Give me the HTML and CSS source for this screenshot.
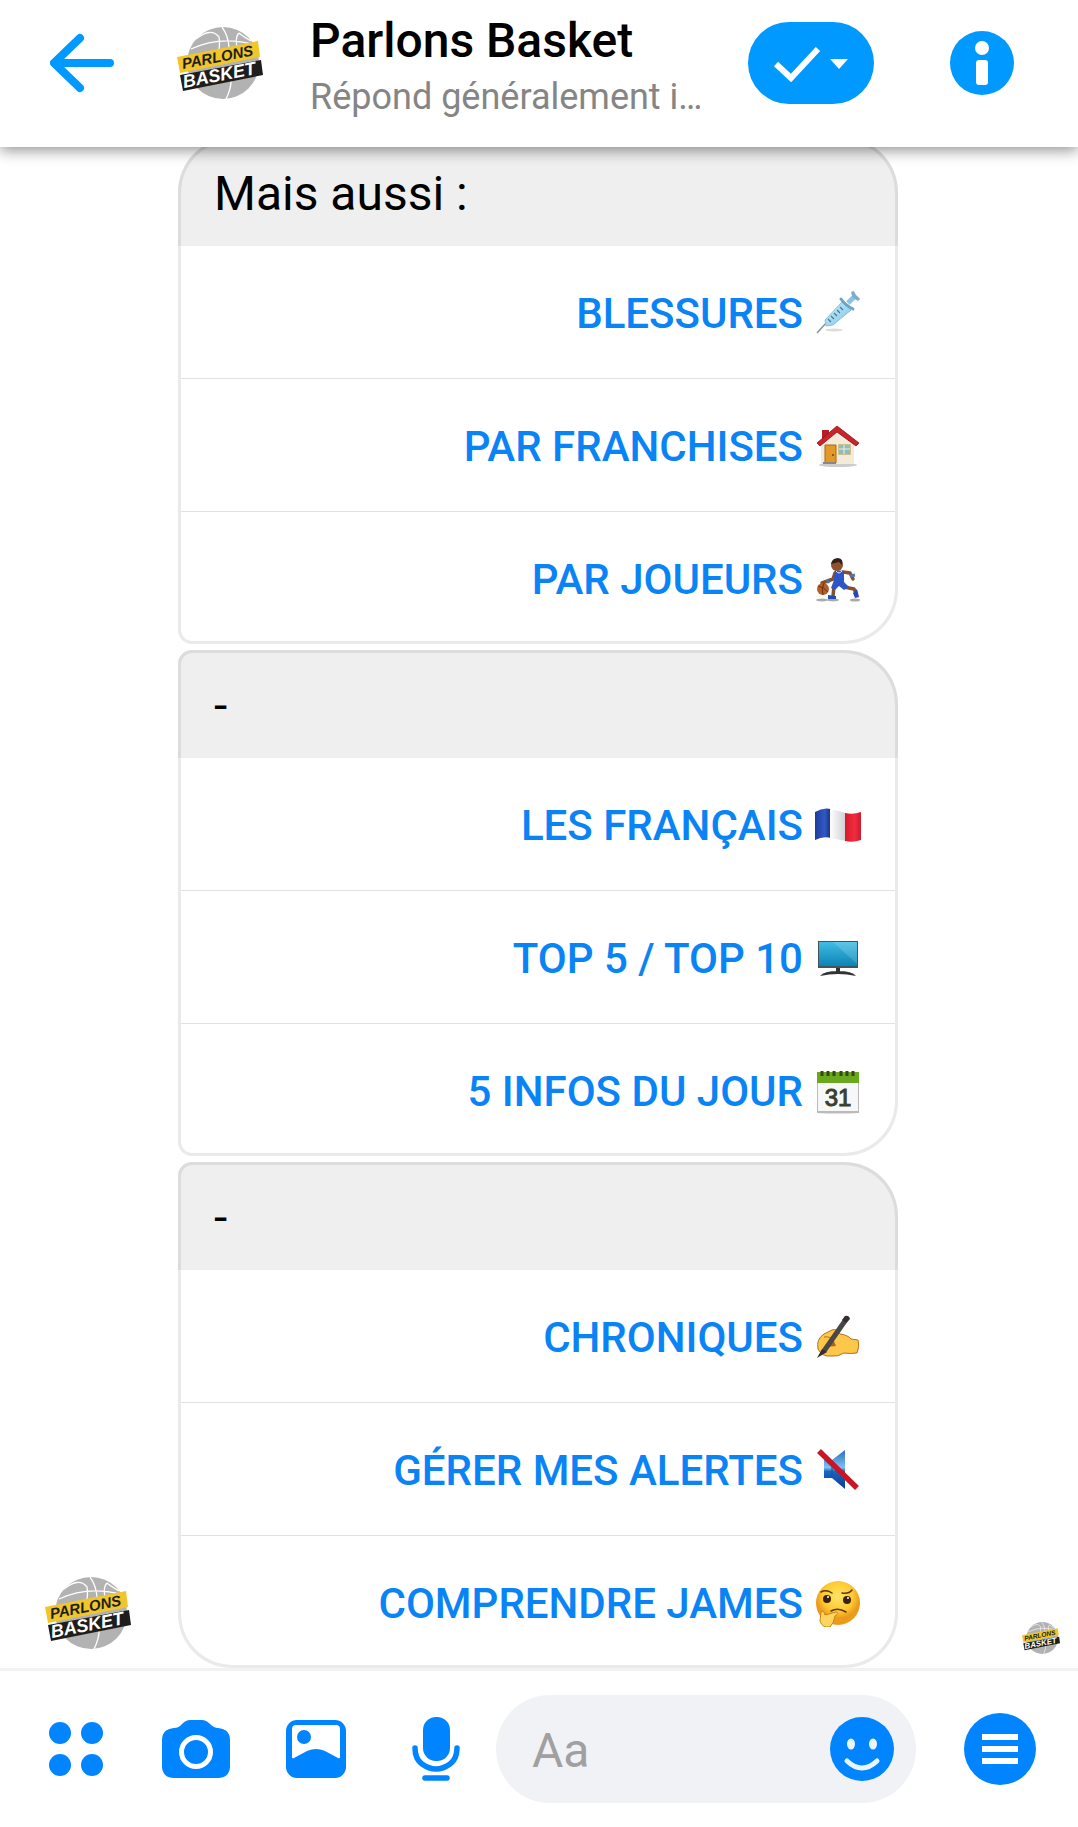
FILE: index.html
```html
<!DOCTYPE html>
<html lang="fr">
<head>
<meta charset="utf-8">
<meta name="viewport" content="width=device-width, initial-scale=1">
<title>Parlons Basket</title>
<link rel="stylesheet" href="styles.css">
</head>
<body>
<svg class="defs" aria-hidden="true">
  <defs>
    <symbol id="logo" viewBox="0 0 86 72">
      <circle cx="46" cy="36" r="36" fill="#b2b2b2"/>
      <g fill="none" stroke="#fff" stroke-width="1.3">
        <path d="M14 22Q44 8 78 18M19 12Q34 0 42 10Q43 16 42 22M45 0Q51 8 52 20M60 20Q58 10 62 6M74 14Q64 8 62 6M54 50Q55 60 49 72"/>
      </g>
      <path d="M0 30L81 14L83 30L3 46Z" fill="#f0c62c"/>
      <path d="M3 48L84 33L86 48L6 64Z" fill="#1d1d1b"/>
      <text class="logo-top" x="6" y="42" transform="rotate(-11 6 42)">PARLONS</text>
      <text class="logo-bottom" x="7" y="61" transform="rotate(-11 7 61)">BASKET</text>
    </symbol>
    <linearGradient id="glass" x2="1" y2="1"><stop stop-color="#cfeefa"/><stop offset="1" stop-color="#7cc4ea"/></linearGradient>
    <linearGradient id="screen" x2="0" y2="1"><stop stop-color="#41bce2"/><stop offset="1" stop-color="#0b84b5"/></linearGradient>
    <linearGradient id="speaker" x2="0" y2="1"><stop stop-color="#2c6cc4"/><stop offset=".45" stop-color="#7cc2f4"/><stop offset=".55" stop-color="#1767c4"/><stop offset="1" stop-color="#0a3c8c"/></linearGradient>
    <linearGradient id="blue" x2="1"><stop stop-color="#1c3c9c"/><stop offset=".6" stop-color="#3159c4"/><stop offset="1" stop-color="#16307c"/></linearGradient>
    <linearGradient id="white" x2="1"><stop stop-color="#fff"/><stop offset="1" stop-color="#cfcfd2"/></linearGradient>
    <linearGradient id="red" x2="1"><stop stop-color="#d8182c"/><stop offset=".6" stop-color="#f22c40"/><stop offset="1" stop-color="#c81c30"/></linearGradient>
    <radialGradient id="face" cy=".35"><stop stop-color="#ffe566"/><stop offset=".7" stop-color="#fdc82e"/><stop offset="1" stop-color="#eb9a1c"/></radialGradient>
  </defs>
</svg>

<header class="topbar">
  <button class="icon-btn back" aria-label="Retour">
    <svg width="64" height="60" viewBox="0 0 64 60" fill="none" stroke="#0099ff" stroke-width="8" stroke-linecap="round" stroke-linejoin="round"><path d="M30 5L4 30L30 55M5 30H60"/></svg>
  </button>
  <svg class="logo" role="img" aria-label="Logo Parlons Basket"><use href="#logo"/></svg>
  <div class="contact">
    <h1 class="contact-name">Parlons Basket</h1>
    <p class="contact-status">Répond généralement i…</p>
  </div>
  <button class="status-btn" aria-label="Marquer comme terminé">
    <svg width="76" height="38" viewBox="0 0 76 38"><path d="M3 20L18 34L45 5" fill="none" stroke="#fff" stroke-width="6"/><path d="M57 15H75L66 25Z" fill="#fff"/></svg>
  </button>
  <button class="icon-btn" aria-label="Informations">
    <svg width="64" height="64" viewBox="0 0 64 64"><circle cx="32" cy="32" r="32" fill="#0099ff"/><circle cx="32" cy="17" r="7" fill="#fff"/><rect x="26" y="29" width="12" height="25" rx="3" fill="#fff"/></svg>
  </button>
</header>

<main class="chat">
  <section class="message">
    <div class="card card-first">
      <p class="card-title">Mais aussi :</p>
      <button class="option">BLESSURES
        <svg class="emoji" viewBox="0 0 44 44"><ellipse cx="18" cy="39" rx="9" ry="1.500" fill="#ddd"/><path d="M1 42L11 31" stroke="#8194a0" stroke-width="1.500"/><path d="M9 29L26 11L35 19L17 34L10 35Z" fill="url(#glass)" stroke="#8fbdd6"/><path d="M12 28L15 31M15 25L18 28M18 22L21 25M21 19L24 22M24 16L27 19" stroke="#467890" stroke-width="1.200"/><path d="M25 8Q29 14 37 18" fill="none" stroke="#6ca5c6" stroke-width="3" stroke-linecap="round"/><path d="M32 12L38 6" stroke="#8bc4e0" stroke-width="5"/><path d="M37 2Q38 6 42 8" fill="none" stroke="#7caecb" stroke-width="3.500" stroke-linecap="round"/></svg>
      </button>
      <button class="option">PAR FRANCHISES
        <svg class="emoji" viewBox="0 0 44 44"><ellipse cx="22" cy="41" rx="19" ry="2" fill="#ccc"/><path d="M6 6H13V20H6Z" fill="#b41e24"/><path d="M5 20L22 6L38 20V40H5Z" fill="#f3ead8"/><path d="M1 19L21 2L43 19L40 22L21 8L4 22Z" fill="#c8242c" stroke="#8e1219" stroke-width=".8"/><path d="M9 21H20V39H9Z" fill="#e3982a" stroke="#a5681b"/><circle cx="17" cy="31" r="1" fill="#6c4410"/><path d="M23 21H34V30H23Z" fill="#8abec0" stroke="#c7b074" stroke-width="1.500"/><path d="M28 21V30M23 25H34" stroke="#f5ecd8"/><path d="M7 38H20V40H7Z" fill="#888"/></svg>
      </button>
      <button class="option">PAR JOUEURS
        <svg class="emoji" viewBox="0 0 44 44"><g fill="#aaa"><ellipse cx="6" cy="42" rx="6" ry="1.500"/><ellipse cx="17" cy="42" rx="6" ry="1.500"/><ellipse cx="39" cy="42" rx="5" ry="1.500"/></g><path d="M19 15L17 21L6 25M27 14L34 15L37 21M18 28L17 38M28 29L38 31L40 35" fill="none" stroke="#87502b" stroke-width="3.500" stroke-linecap="round" stroke-linejoin="round"/><path d="M19 12L28 13L28 24L33 29L28 32L23 28L19 32L15 30L18 22Z" fill="#2c56c8"/><path d="M20 13Q23 17 26 13" fill="none" stroke="#dfe8ff"/><circle cx="21" cy="7" r="6" fill="#8e532c"/><path d="M15 6Q16 0 22 0Q28 1 26 7L23 4Z" fill="#352119"/><path d="M11 22L13 25M34 18L39 17" stroke="#5474a8" stroke-width="3"/><circle cx="7" cy="31" r="6" fill="#b85d28"/><path d="M2 28Q8 29 12 34M8 25Q5 31 7 37" fill="none" stroke="#673014"/><path d="M12 37L20 38V41H12ZM37 35L41 31L43 39L39 40Z" fill="#234ab8"/></svg>
      </button>
    </div>
  </section>

  <section class="message">
    <div class="card">
      <p class="card-title">-</p>
      <button class="option">LES FRANÇAIS
        <svg class="emoji emoji-wide" viewBox="0 0 46 44"><path d="M0 9Q8 4 16 6V35Q8 33 0 37Z" fill="url(#blue)"/><path d="M15 6L31 10V38L15 35Z" fill="url(#white)"/><path d="M30 10Q38 12 46 9V37Q38 40 30 38Z" fill="url(#red)"/></svg>
      </button>
      <button class="option">TOP 5 / TOP 10
        <svg class="emoji" viewBox="0 0 44 44"><path d="M2 5H42V32H2Z" fill="#45535c"/><path d="M3 6H41V30H3Z" fill="url(#screen)"/><path d="M17 6H41V28Z" fill="#fff" opacity=".15"/><path d="M20 32H24V36H20ZM4 40Q8 35 22 35Q36 35 40 40Q22 36 4 40Z" fill="#333"/></svg>
      </button>
      <button class="option">5 INFOS DU JOUR
        <svg class="emoji" viewBox="0 0 44 44"><path d="M1 6H43V43Q22 44 1 43Z" fill="#bbb"/><path d="M2 12H42V41H2Z" fill="#f7f7f7"/><path d="M1 2H43V13H1Z" fill="#69a81d"/><path d="M6 1V6M12 1V6M18 1V6M25 1V6M31 1V6M37 1V6" stroke="#35471c" stroke-width="3"/><text class="day" x="22" y="36">31</text></svg>
      </button>
    </div>
  </section>

  <section class="message">
    <svg class="logo sender" role="img" aria-label="Parlons Basket"><use href="#logo"/></svg>
    <div class="card card-last">
      <p class="card-title">-</p>
      <button class="option">CHRONIQUES
        <svg class="emoji" viewBox="0 0 44 44"><path d="M2 34Q0 24 8 19L16 15Q21 13 24 19Q32 20 35 24L42 25Q44 31 41 38Q34 39 28 38Q22 42 15 41Q6 42 2 34Z" fill="#fdc74a" stroke="#b46f1b"/><path d="M10 32L17 24L20 31Z" fill="#ad631a"/><path d="M8 22Q15 21 18 26" fill="none" stroke="#b46f1b"/><path d="M31 3L8 36" stroke="#4b4646" stroke-width="5"/><path d="M29 1Q33 0 34 4L30 8L26 5ZM6 34L11 37L1 43Z" fill="#332e30"/></svg>
      </button>
      <button class="option">GÉRER MES ALERTES
        <svg class="emoji" viewBox="0 0 44 44"><path d="M8 12H16L29 2V41L16 30H8Z" fill="url(#speaker)"/><path d="M16 12V30" stroke="#174e96"/><path d="M3 3L41 40" stroke="#c81628" stroke-width="5.500"/></svg>
      </button>
      <button class="option">COMPRENDRE JAMES
        <svg class="emoji emoji-wide" viewBox="0 0 46 46"><circle cx="23" cy="22" r="22" fill="url(#face)"/><g fill="#3d2110"><circle cx="12" cy="18" r="4"/><circle cx="32" cy="19" r="4"/></g><g fill="#fff"><circle cx="13" cy="16" r="1"/><circle cx="33" cy="17" r="1"/></g><path d="M6 11Q11 8 17 12M27 12Q34 13 37 9M16 30Q23 26 31 31" fill="none" stroke="#5c3512" stroke-width="1.500" stroke-linecap="round"/><path d="M6 31Q8 28 10 34L21 31Q25 32 20 35Q19 42 15 46Q7 47 5 40Z" fill="#ffd65c" stroke="#c98319"/></svg>
      </button>
    </div>
    <svg class="seen" role="img" aria-label="Vu par Parlons Basket"><use href="#logo"/></svg>
  </section>
</main>

<footer class="composer">
  <div class="tools">
    <button class="icon-btn tool" aria-label="Plus">
      <svg width="54" height="54" viewBox="0 0 54 54" fill="#0084ff"><circle cx="11" cy="11" r="11"/><circle cx="43" cy="11" r="11"/><circle cx="11" cy="43" r="11"/><circle cx="43" cy="43" r="11"/></svg>
    </button>
    <button class="icon-btn tool" aria-label="Appareil photo">
      <svg width="68" height="60" viewBox="0 0 68 60"><path d="M12 9Q17 9 20 5Q24 1 28 1H40Q44 1 48 5Q52 9 56 9Q68 10 68 21V48Q67 59 56 59H12Q1 59 0 48V21Q0 10 12 9Z" fill="#0084ff"/><circle cx="34" cy="33" r="14.500" fill="#0084ff" stroke="#fff" stroke-width="5"/></svg>
    </button>
    <button class="icon-btn tool" aria-label="Galerie">
      <svg width="60" height="60" viewBox="0 0 60 60"><rect y="1" width="60" height="58" rx="11" fill="#0084ff"/><path d="M10 6H50Q54 6 54 10V38Q54 40 52 39L39 32Q30 28 21 32L8 39Q6 40 6 38V10Q6 6 10 6Z" fill="#fff"/><circle cx="18" cy="18" r="7" fill="#0084ff"/></svg>
    </button>
    <button class="icon-btn tool" aria-label="Message vocal">
      <svg width="48" height="64" viewBox="0 0 48 64"><rect x="11" width="27" height="44" rx="13" fill="#0084ff"/><path d="M3 31Q3 42 10 47Q17 52 24 52Q31 52 38 47Q45 42 45 31M13 61H35" fill="none" stroke="#0084ff" stroke-width="5.500" stroke-linecap="round"/></svg>
    </button>
  </div>
  <div class="field">
    <input class="field-input" type="text" placeholder="Aa" aria-label="Message">
    <button class="icon-btn" aria-label="Émojis">
      <svg width="64" height="64" viewBox="0 0 64 64"><circle cx="32" cy="32" r="32" fill="#0084ff"/><ellipse cx="21" cy="27" rx="4" ry="5.500" fill="#e9f5ff"/><ellipse cx="43" cy="27" rx="4" ry="5.500" fill="#e9f5ff"/><path d="M17 44Q32 58 47 44" fill="none" stroke="#e9f5ff" stroke-width="5" stroke-linecap="round"/></svg>
    </button>
  </div>
  <button class="icon-btn menu" aria-label="Menu">
    <svg width="72" height="72" viewBox="0 0 72 72"><circle cx="36" cy="36" r="36" fill="#0084ff"/><path d="M18 24H54M18 36H54M18 48H54" stroke="#fff" stroke-width="6"/></svg>
  </button>
</footer>
</body>
</html>
```
FILE: styles.css
```css
* {
  box-sizing: border-box;
}

body {
  margin: 0;
  height: 100vh;
  display: flex;
  flex-direction: column;
  background: #fff;
  font-family: Roboto, "Liberation Sans", sans-serif;
  color: #000;
}

h1,
p {
  margin: 0;
}

button {
  padding: 0;
  border: 0;
  background: none;
  font: inherit;
  cursor: pointer;
}

svg {
  display: block;
  flex: none;
}

.defs {
  position: absolute;
  width: 0;
  height: 0;
}

.icon-btn {
  flex: none;
}

/* Logo */
.logo {
  width: 86px;
  height: 72px;
}

.logo-top,
.logo-bottom {
  font-family: "Liberation Sans", sans-serif;
  font-weight: bold;
  font-style: italic;
}

.logo-top {
  font-size: 15px;
  fill: #1d1d1b;
}

.logo-bottom {
  font-size: 18px;
  fill: #fff;
}

/* Top bar */
.topbar {
  position: relative;
  z-index: 1;
  flex: none;
  display: flex;
  align-items: center;
  height: 147px;
  padding: 0 64px 22px 50px;
  background: #fff;
  box-shadow: 0 3px 14px rgba(0, 0, 0, 0.45);
}

.back {
  margin-right: 63px;
}

.contact {
  flex: 1;
  min-width: 0;
  align-self: flex-start;
  margin: 0 44px 0 47px;
  padding-top: 11px;
}

.contact-name {
  font-size: 48px;
  font-weight: 500;
  line-height: 60px;
}

.contact-status {
  overflow: hidden;
  font-size: 36px;
  line-height: 52px;
  color: #858585;
  white-space: nowrap;
  text-overflow: ellipsis;
}

.status-btn {
  display: flex;
  align-items: center;
  justify-content: center;
  width: 126px;
  height: 82px;
  margin-right: 76px;
  border-radius: 41px;
  background: #0099ff;
}

/* Conversation */
.chat {
  flex: 1;
  min-height: 0;
  display: flex;
  flex-direction: column;
  justify-content: flex-end;
  gap: 6px;
}

.message {
  flex: none;
  display: grid;
  grid-template-columns: 178px 1fr 180px;
  align-items: end;
}

.sender {
  margin: 0 0 19px 45px;
}

.seen {
  width: 38px;
  height: 32px;
  margin: 0 0 14px 124px;
}

.card {
  grid-column: 2;
  overflow: hidden;
  border: 3px solid transparent;
  border-radius: 14px 54px 54px 14px;
  background: linear-gradient(#dcdcdc 108px, #eaeaea 108px) border-box;
}

.card-first {
  border-top-left-radius: 54px;
}

.card-last {
  border-bottom-left-radius: 54px;
}

.card-title {
  height: 105px;
  padding: 25px 33px;
  border-radius: 11px 51px 0 0;
  background: #efefef;
  font-size: 48px;
  line-height: 56px;
}

.card-first .card-title {
  border-top-left-radius: 51px;
}

.option {
  display: flex;
  align-items: center;
  justify-content: flex-end;
  gap: 13px;
  width: 100%;
  height: 133px;
  padding: 2px 34px 0;
  border-bottom: 1px solid #e2e2e2;
  background: #fff;
  font-size: 42px;
  font-weight: 500;
  color: #0a84f5;
}

.option:last-child {
  height: 129px;
  padding-top: 6px;
  border-bottom: 0;
  border-radius: 0 0 51px 11px;
}

.card-last .option:last-child {
  border-bottom-left-radius: 51px;
}

.emoji {
  width: 44px;
  height: 44px;
  margin-right: 1px;
}

.emoji-wide {
  width: 46px;
  height: 46px;
  margin: 0 0 0 -1px;
}

.day {
  font-family: "Liberation Sans", sans-serif;
  font-size: 24px;
  text-anchor: middle;
  fill: #38402c;
  stroke: #38402c;
}

/* Composer */
.composer {
  flex: none;
  display: flex;
  align-items: center;
  padding: 24px 42px 24px 16px;
  border-top: 3px solid #f2f2f2;
  background: #fff;
}

.tools {
  display: flex;
  align-items: center;
}

.tool {
  display: flex;
  justify-content: center;
  width: 120px;
}

.menu {
  margin-left: 48px;
}

.field {
  flex: 1;
  min-width: 0;
  display: flex;
  align-items: center;
  height: 108px;
  padding: 0 22px 0 36px;
  border-radius: 54px;
  background: #f0f2f5;
}

.field-input {
  flex: 1;
  min-width: 0;
  padding: 2px 0 0;
  border: 0;
  outline: 0;
  background: none;
  font: inherit;
  font-size: 48px;
}

.field-input::placeholder {
  color: #a0a0a0;
}
```
